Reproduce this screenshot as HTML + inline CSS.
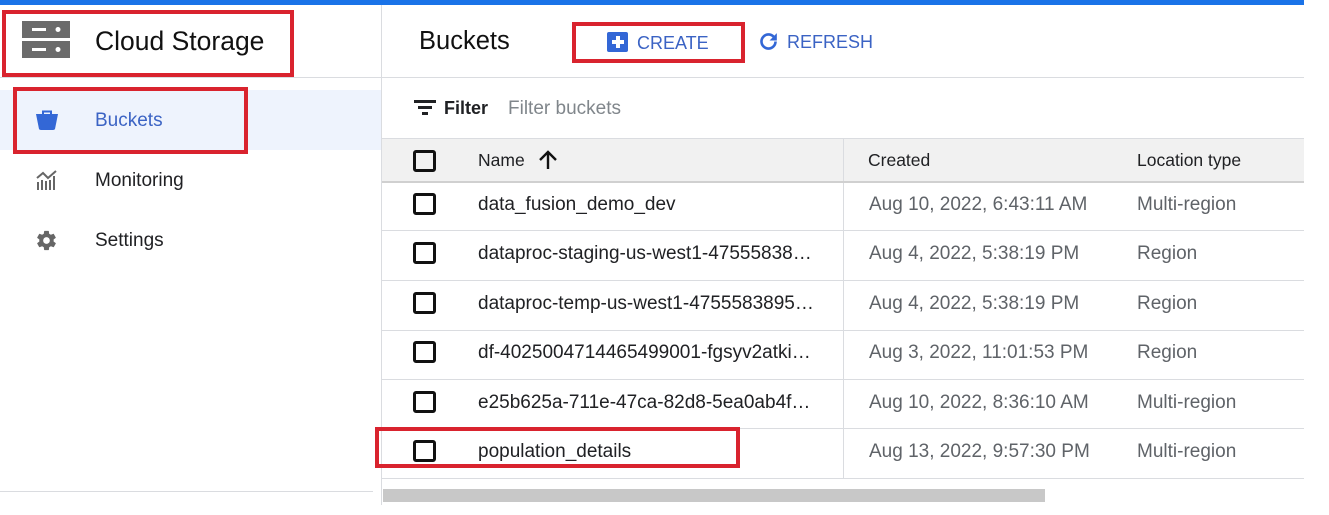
<!DOCTYPE html>
<html><head><style>
*{margin:0;padding:0;box-sizing:border-box}
body{width:1329px;height:515px;background:#fff;font-family:"Liberation Sans",Arial,sans-serif;position:relative;overflow:hidden;color:#202124}
.a{position:absolute}
.red{position:absolute;border:4px solid #d9232e}
.cb{position:absolute;left:413px;width:23px;height:22px;border:3px solid #111;border-radius:3px}
.row{position:absolute;left:382px;width:922px;height:1px;background:#dadce0}
.t{position:absolute;font-size:18px;white-space:nowrap}
.r{font-size:19px}
.n{left:478px;color:#202124}
.d{left:869px;color:#5f6368}
.l{left:1137px;color:#5f6368}
</style></head><body>
<div class="a" style="left:0;top:0;width:1304px;height:5px;background:#1a73e8"></div>
<div class="a" style="left:1304px;top:0;width:25px;height:515px;background:#fff"></div>
<!-- sidebar -->
<div class="a" style="left:381px;top:5px;width:1px;height:500px;background:#dadce0"></div>
<div class="a" style="left:0;top:77px;width:381px;height:1px;background:#dadce0"></div>
<div class="a" style="left:0;top:90px;width:381px;height:60px;background:#eef3fd"></div>
<div class="a" style="left:0;top:491px;width:373px;height:1px;background:#dadce0"></div>
<svg class="a" style="left:22px;top:21px" width="48" height="38" viewBox="0 0 48 38">
<rect x="0" y="0" width="48" height="17" fill="#6b6b6b"/><rect x="0" y="20" width="48" height="17" fill="#6b6b6b"/>
<rect x="10" y="7" width="14" height="3" fill="#fff"/><rect x="10" y="27" width="14" height="3" fill="#fff"/>
<circle cx="36" cy="8.5" r="2.5" fill="#fff"/><circle cx="36" cy="28.5" r="2.5" fill="#fff"/></svg>
<div class="t" style="left:95px;top:26px;font-size:26.5px;color:#111">Cloud Storage</div>
<svg class="a" style="left:36px;top:110px" width="22" height="20" viewBox="0 0 22 20"><path d="M7 4 V1.5 H15 V4" stroke="#3367d6" stroke-width="2" fill="none"/><path d="M0 4 H22 L19 19 Q18.5 20 17 20 H5 Q3.5 20 3 19 Z" fill="#3367d6"/></svg>
<div class="t r" style="left:95px;top:110px;color:#3b63c4">Buckets</div>
<svg class="a" style="left:36px;top:170px" width="21" height="20" viewBox="0 0 21 20"><path d="M1 8 L7 3 L12 8 L20 1" stroke="#666" stroke-width="2" fill="none"/><path d="M1 20V12h2v8zM5 20V10h2v10zM9 20V11h2v9zM13 20V10h2v10zM17 20V6h2v14z" fill="#666"/></svg>
<div class="t r" style="left:95px;top:170px">Monitoring</div>
<svg class="a" style="left:35px;top:229px" width="23" height="23" viewBox="0 0 24 24"><path fill="#666" d="M19.4 13c.04-.33.06-.66.06-1s-.02-.67-.06-1l2.1-1.650c.2-.15.25-.42.12-.64l-2-3.46c-.12-.22-.39-.3-.61-.22l-2.49 1c-.52-.4-1.08-.73-1.690-.98l-.38-2.65A.49.49 0 0014 2h-4c-.25 0-.46.18-.49.42l-.38 2.65c-.61.25-1.17.59-1.69.98l-2.49-1c-.23-.09-.49 0-.61.22l-2 3.46c-.13.22-.07.49.12.64L4.57 11c-.04.33-.07.67-.07 1s.03.67.07 1l-2.11 1.65c-.19.15-.24.42-.12.64l2 3.46c.12.22.39.3.61.22l2.49-1c.52.4 1.08.73 1.69.98l.38 2.65c.03.24.24.42.49.42h4c.25 0 .46-.18.49-.42l.38-2.65c.61-.25 1.17-.59 1.69-.98l2.49 1c.23.09.49 0 .61-.22l2-3.46c.12-.22.07-.49-.12-.64L19.4 13zM12 15.5a3.5 3.5 0 110-7 3.5 3.5 0 010 7z"/></svg>
<div class="t r" style="left:95px;top:230px">Settings</div>
<!-- main header -->
<div class="t" style="left:419px;top:27px;font-size:25.5px;color:#111">Buckets</div>
<div class="a" style="left:607px;top:32px;width:21px;height:20px;background:#3367d6;border-radius:2px"></div>
<div class="a" style="left:615.5px;top:36px;width:4px;height:12px;background:#fff"></div>
<div class="a" style="left:611.5px;top:40px;width:12px;height:4px;background:#fff"></div>
<div class="t" style="left:637px;top:33px;color:#3b63c4">CREATE</div>
<svg class="a" style="left:756px;top:29px" width="25" height="25" viewBox="0 0 24 24"><path fill="#3367d6" d="M17.65 6.35A7.96 7.96 0 0012 4a8 8 0 108 8h-2.5A5.5 5.5 0 1112 6.5c1.52 0 2.880.62 3.87 1.63L13 11h7V4l-2.35 2.35z"/></svg>
<div class="t" style="left:787px;top:32px;color:#3b63c4">REFRESH</div>
<div class="a" style="left:382px;top:77px;width:922px;height:1px;background:#dadce0"></div>
<!-- filter -->
<svg class="a" style="left:414px;top:99px" width="22" height="16" viewBox="0 0 22 16"><rect x="0" y="1" width="22" height="3" fill="#202124"/><rect x="4" y="7" width="14" height="3" fill="#202124"/><rect x="8" y="13" width="6" height="3" fill="#202124"/></svg>
<div class="t" style="left:444px;top:98px;font-weight:bold;color:#202124">Filter</div>
<div class="t r" style="left:508px;top:98px;color:#80868b">Filter buckets</div>
<!-- table header -->
<div class="a" style="left:382px;top:138px;width:922px;height:44px;background:#f1f1f1;border-top:1px solid #dadce0"></div>
<div class="a" style="left:843px;top:138px;width:1px;height:340px;background:#dadce0"></div>
<div class="cb" style="top:150px"></div>
<div class="t" style="left:478px;top:150px;font-size:17.5px">Name</div>
<svg class="a" style="left:538px;top:150px" width="20" height="20" viewBox="0 0 20 20"><path d="M10 19V2M2 10l8-8 8 8" stroke="#111" stroke-width="2.4" fill="none"/></svg>
<div class="t" style="left:868px;top:150px;font-size:17.5px">Created</div>
<div class="t" style="left:1137px;top:150px;font-size:17.5px">Location type</div>
<div class="row" style="top:181px;height:2px;background:#d0d0d0"></div>
<!-- rows -->
<div class="cb" style="top:193px"></div><div class="t r n" style="top:194px">data_fusion_demo_dev</div><div class="t r d" style="top:194px">Aug 10, 2022, 6:43:11 AM</div><div class="t r l" style="top:194px">Multi-region</div>
<div class="row" style="top:230px"></div>
<div class="cb" style="top:242px"></div><div class="t r n" style="top:243px">dataproc-staging-us-west1-47555838…</div><div class="t r d" style="top:243px">Aug 4, 2022, 5:38:19 PM</div><div class="t r l" style="top:243px">Region</div>
<div class="row" style="top:280px"></div>
<div class="cb" style="top:292px"></div><div class="t r n" style="top:293px">dataproc-temp-us-west1-4755583895…</div><div class="t r d" style="top:293px">Aug 4, 2022, 5:38:19 PM</div><div class="t r l" style="top:293px">Region</div>
<div class="row" style="top:330px"></div>
<div class="cb" style="top:341px"></div><div class="t r n" style="top:342px">df-4025004714465499001-fgsyv2atki…</div><div class="t r d" style="top:342px">Aug 3, 2022, 11:01:53 PM</div><div class="t r l" style="top:342px">Region</div>
<div class="row" style="top:379px"></div>
<div class="cb" style="top:391px"></div><div class="t r n" style="top:392px">e25b625a-711e-47ca-82d8-5ea0ab4f…</div><div class="t r d" style="top:392px">Aug 10, 2022, 8:36:10 AM</div><div class="t r l" style="top:392px">Multi-region</div>
<div class="row" style="top:428px"></div>
<div class="cb" style="top:440px"></div><div class="t r n" style="top:441px">population_details</div><div class="t r d" style="top:441px">Aug 13, 2022, 9:57:30 PM</div><div class="t r l" style="top:441px">Multi-region</div>
<div class="row" style="top:478px"></div>
<div class="a" style="left:383px;top:489px;width:662px;height:13px;background:#c8c8c8"></div>
<!-- red boxes -->
<div class="red" style="left:2px;top:10px;width:292px;height:67px"></div>
<div class="red" style="left:13px;top:87px;width:235px;height:67px"></div>
<div class="red" style="left:572px;top:22px;width:173px;height:41px"></div>
<div class="red" style="left:375px;top:427px;width:365px;height:41px"></div>
</body></html>
